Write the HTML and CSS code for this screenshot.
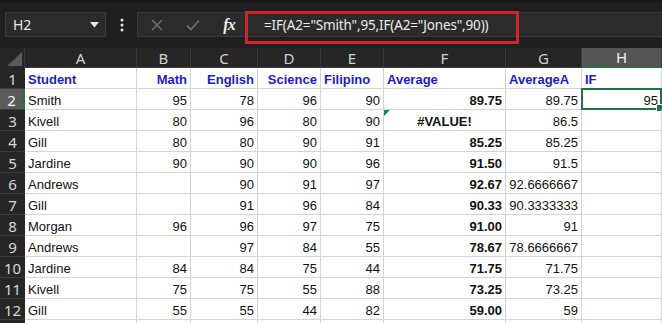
FILE: index.html
```html
<!DOCTYPE html>
<html>
<head>
<meta charset="utf-8">
<link rel="stylesheet" href="styles.css">
</head>
<body>
<div class="app">
  <div class="toolbar">
    <div class="namebox">
      <span class="nb-text">H2</span>
      <svg class="caret" width="9" height="6" viewBox="0 0 9 6"><path d="M0 0H9L4.5 5.5Z" fill="#e6e6e6"/></svg>
    </div>
    <div class="kebab">
      <svg width="4" height="14" viewBox="0 0 4 14"><circle cx="2" cy="2" r="1.5" fill="#e6e6e6"/><circle cx="2" cy="7" r="1.5" fill="#e6e6e6"/><circle cx="2" cy="12" r="1.5" fill="#e6e6e6"/></svg>
    </div>
    <div class="fbar">
      <span class="ico"><svg width="12" height="12" viewBox="0 0 12 12"><path d="M1 1L11 11M11 1L1 11" stroke="#6e6e6e" stroke-width="1.6"/></svg></span>
      <span class="ico"><svg width="14" height="12" viewBox="0 0 14 12"><path d="M1 6.5L5 10.5L13 1.5" stroke="#6e6e6e" stroke-width="1.8" fill="none"/></svg></span>
      <span class="ico fx">fx</span>
      <div class="formula">=IF(A2="Smith",95,IF(A2="Jones",90))</div>
    </div>
    <div class="redbox"></div>
  </div>
  <div class="sheet">
    <div class="corner"><svg width="15" height="14" viewBox="0 0 15 14"><path d="M15 0V14H0Z" fill="#5a5a5a"/></svg></div>
    <div class="ch">A</div><div class="ch">B</div><div class="ch">C</div><div class="ch">D</div><div class="ch">E</div><div class="ch">F</div><div class="ch">G</div><div class="ch sel">H</div>

    <div class="rh">1</div>
    <div class="c hd">Student</div><div class="c hd r">Math</div><div class="c hd r">English</div><div class="c hd r">Science</div><div class="c hd">Filipino</div><div class="c hd">Average</div><div class="c hd">AverageA</div><div class="c hd">IF</div>

    <div class="rh sel">2</div>
    <div class="c">Smith</div><div class="c r">95</div><div class="c r">78</div><div class="c r">96</div><div class="c r">90</div><div class="c r b">89.75</div><div class="c r">89.75</div><div class="c r active">95</div>

    <div class="rh">3</div>
    <div class="c">Kivell</div><div class="c r">80</div><div class="c r">96</div><div class="c r">80</div><div class="c r">90</div><div class="c ctr b err">#VALUE!</div><div class="c r">86.5</div><div class="c"></div>

    <div class="rh">4</div>
    <div class="c">Gill</div><div class="c r">80</div><div class="c r">80</div><div class="c r">90</div><div class="c r">91</div><div class="c r b">85.25</div><div class="c r">85.25</div><div class="c"></div>

    <div class="rh">5</div>
    <div class="c">Jardine</div><div class="c r">90</div><div class="c r">90</div><div class="c r">90</div><div class="c r">96</div><div class="c r b">91.50</div><div class="c r">91.5</div><div class="c"></div>

    <div class="rh">6</div>
    <div class="c">Andrews</div><div class="c r"></div><div class="c r">90</div><div class="c r">91</div><div class="c r">97</div><div class="c r b">92.67</div><div class="c r">92.6666667</div><div class="c"></div>

    <div class="rh">7</div>
    <div class="c">Gill</div><div class="c r"></div><div class="c r">91</div><div class="c r">96</div><div class="c r">84</div><div class="c r b">90.33</div><div class="c r">90.3333333</div><div class="c"></div>

    <div class="rh">8</div>
    <div class="c">Morgan</div><div class="c r">96</div><div class="c r">96</div><div class="c r">97</div><div class="c r">75</div><div class="c r b">91.00</div><div class="c r">91</div><div class="c"></div>

    <div class="rh">9</div>
    <div class="c">Andrews</div><div class="c r"></div><div class="c r">97</div><div class="c r">84</div><div class="c r">55</div><div class="c r b">78.67</div><div class="c r">78.6666667</div><div class="c"></div>

    <div class="rh">10</div>
    <div class="c">Jardine</div><div class="c r">84</div><div class="c r">84</div><div class="c r">75</div><div class="c r">44</div><div class="c r b">71.75</div><div class="c r">71.75</div><div class="c"></div>

    <div class="rh">11</div>
    <div class="c">Kivell</div><div class="c r">75</div><div class="c r">75</div><div class="c r">55</div><div class="c r">88</div><div class="c r b">73.25</div><div class="c r">73.25</div><div class="c"></div>

    <div class="rh">12</div>
    <div class="c">Gill</div><div class="c r">55</div><div class="c r">55</div><div class="c r">44</div><div class="c r">82</div><div class="c r b">59.00</div><div class="c r">59</div><div class="c"></div>

    <div class="rh"></div>
    <div class="c"></div><div class="c"></div><div class="c"></div><div class="c"></div><div class="c"></div><div class="c"></div><div class="c"></div><div class="c"></div>
  </div>
</div>
</body>
</html>
```

FILE: styles.css
```css
* { box-sizing: border-box; }
html, body { margin: 0; padding: 0; }
body {
  background: #1f1f1f;
  width: 662px;
  height: 323px;
  overflow: hidden;
  font-family: "Liberation Sans", Arial, sans-serif;
}
.app { width: 662px; height: 323px; overflow: hidden; }

.toolbar {
  position: relative;
  height: 48px;
  display: flex;
  align-items: flex-start;
  padding: 9px 0 0 5px;
  background: #1f1f1f;
  border-top: 3px solid #191919;
}
.namebox {
  width: 101px;
  height: 25px;
  background: #2b2b2b;
  border: 1px solid #3a3a3a;
  display: flex;
  align-items: center;
  justify-content: space-between;
  padding: 0 6px 0 7px;
  color: #e8e8e8;
  font-family: "Noto Sans", "Open Sans", sans-serif;
  font-size: 14px;
}
.caret { margin-top: 1px; }
.kebab {
  width: 31px;
  height: 25px;
  display: flex;
  align-items: center;
  justify-content: center;
}
.fbar {
  flex: 1;
  height: 25px;
  background: #2b2b2b;
  border: 1px solid #3a3a3a;
  border-right: none;
  display: flex;
  align-items: center;
}
.ico {
  width: 36px;
  display: flex;
  justify-content: center;
  align-items: center;
}
.ico:first-child { margin-left: 1px; }
.fx {
  font-family: "Liberation Serif", "Times New Roman", serif;
  font-style: italic;
  font-weight: bold;
  font-size: 16px;
  color: #f0f0f0;
  letter-spacing: -1px;
}
.formula {
  margin-left: 17px;
  color: #ececec;
  font-family: "Noto Sans", "Open Sans", sans-serif;
  font-size: 13.5px;
  white-space: nowrap;
  letter-spacing: -0.15px;
}
.redbox {
  position: absolute;
  left: 245px;
  top: 8px;
  width: 274px;
  height: 33px;
  border: 3px solid #d2232a;
  pointer-events: none;
}

.sheet {
  display: grid;
  grid-template-columns: 25px 112px 54px 67px 63px 63px 122px 76px 80px;
  grid-template-rows: 20px repeat(13, 21px);
  background: #ffffff;
}
.corner {
  background: #262626;
  border-right: 1px solid #3c3c3c;
  display: flex;
  align-items: flex-end;
  justify-content: flex-end;
  padding: 0 2px 2px 0;
}
.ch {
  background: #262626;
  color: #d2d2d2;
  border-right: 1px solid #3c3c3c;
  border-bottom: 1px solid #3c3c3c;
  display: flex;
  align-items: center;
  justify-content: center;
  font-family: "Noto Sans", "Open Sans", sans-serif;
  font-size: 15px;
  line-height: 20px;
}
.ch.sel {
  background: #545454;
  color: #f2f2f2;
  border-bottom: 2px solid #217346;
}
.rh {
  background: #262626;
  color: #d8d8d8;
  border-bottom: 1px solid #3c3c3c;
  display: flex;
  align-items: center;
  justify-content: center;
  font-family: "Noto Sans", "Open Sans", sans-serif;
  font-size: 15px;
  padding-top: 1px;
}
.rh.sel {
  background: #5a5a5a;
  color: #f2f2f2;
  border-right: 2px solid #217346;
}
.c {
  border-right: 1px solid #d4d4d4;
  border-bottom: 1px solid #d4d4d4;
  display: flex;
  align-items: flex-end;
  padding: 0 3px 1px 3px;
  font-size: 13px;
  line-height: 15px;
  color: #111;
  white-space: nowrap;
  overflow: visible;
  position: relative;
}
.c.r { justify-content: flex-end; }
.c.ctr { justify-content: center; }
.c.b { font-weight: bold; }
.c.hd {
  font-weight: bold;
  color: #1c1cc9;
}
.c.active::before {
  content: "";
  position: absolute;
  left: -1px;
  top: -1px;
  right: -1px;
  bottom: -1px;
  border: 2px solid #217346;
}
.c.active::after {
  content: "";
  position: absolute;
  right: -3px;
  bottom: -3px;
  width: 6px;
  height: 6px;
  background: #217346;
  border: 1px solid #ffffff;
}
.c.err::before {
  content: "";
  position: absolute;
  left: 0;
  top: 0;
  border-top: 6px solid #1e8a3c;
  border-right: 6px solid transparent;
}
```
